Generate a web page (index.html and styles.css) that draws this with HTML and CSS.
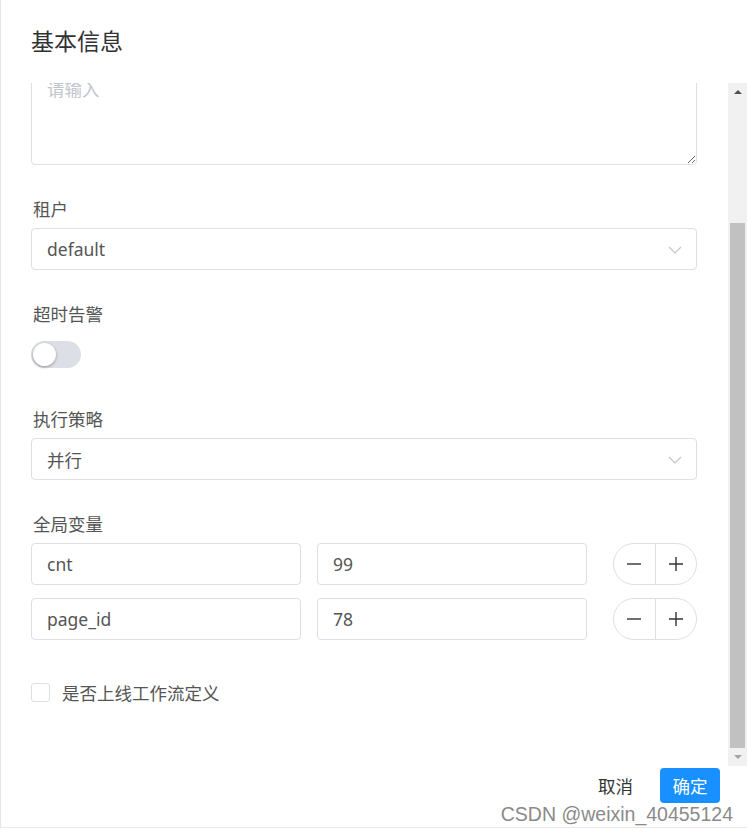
FILE: index.html
```html
<!DOCTYPE html>
<html lang="zh">
<head>
<meta charset="utf-8">
<link rel="stylesheet" href="styles.css">
</head>
<body>
<div class="dialog">
  <div class="header"><span class="title">基本信息</span></div>
  <div class="body">
    <div class="content">
      <div class="inner">
        <textarea class="textarea" placeholder="请输入"></textarea>

        <div class="item">
          <div class="label">租户</div>
          <div class="select"><span>default</span>
            <svg class="arrow" width="14" height="8" viewBox="0 0 14 8"><path d="M1 1l6 6 6-6" fill="none" stroke="#c0c4cc" stroke-width="1.2"/></svg>
          </div>
        </div>

        <div class="item">
          <div class="label">超时告警</div>
          <div class="switch-wrap"><div class="switch"><div class="knob"></div></div></div>
        </div>

        <div class="item">
          <div class="label">执行策略</div>
          <div class="select"><span>并行</span>
            <svg class="arrow" width="14" height="8" viewBox="0 0 14 8"><path d="M1 1l6 6 6-6" fill="none" stroke="#c0c4cc" stroke-width="1.2"/></svg>
          </div>
        </div>

        <div class="item">
          <div class="label">全局变量</div>
          <div class="vars">
            <div class="var-row">
              <div class="input">cnt</div>
              <div class="input">99</div>
              <div class="btn-group">
                <div class="gbtn"><svg width="16" height="16" viewBox="0 0 16 16"><path d="M1 8h14" stroke="#333" stroke-width="1.4"/></svg></div>
                <div class="gbtn sep"><svg width="16" height="16" viewBox="0 0 16 16"><path d="M1 8h14M8 1v14" stroke="#333" stroke-width="1.4"/></svg></div>
              </div>
            </div>
            <div class="var-row">
              <div class="input">page_id</div>
              <div class="input">78</div>
              <div class="btn-group">
                <div class="gbtn"><svg width="16" height="16" viewBox="0 0 16 16"><path d="M1 8h14" stroke="#333" stroke-width="1.4"/></svg></div>
                <div class="gbtn sep"><svg width="16" height="16" viewBox="0 0 16 16"><path d="M1 8h14M8 1v14" stroke="#333" stroke-width="1.4"/></svg></div>
              </div>
            </div>
          </div>
        </div>

        <div class="check-row">
          <span class="checkbox"></span>
          <span class="check-label">是否上线工作流定义</span>
        </div>
      </div>
    </div>
    <div class="scrollbar">
      <div class="sb-arrow up"></div>
      <div class="sb-track"><div class="sb-thumb"></div></div>
      <div class="sb-arrow down"></div>
    </div>
  </div>
  <div class="footer">
    <span class="cancel">取消</span>
    <span class="ok">确定</span>
  </div>
  <div class="watermark">CSDN @weixin_40455124</div>
</div>
</body>
</html>
```
FILE: styles.css
```css
* { box-sizing: border-box; }
html, body { margin: 0; padding: 0; background: #fff; }
body {
  font-family: "Noto Sans", "Noto Sans CJK SC", sans-serif;
  color: #606266;
  width: 747px;
  height: 834px;
  overflow: hidden;
}
.dialog {
  position: relative;
  width: 747px;
  height: 828px;
  border-left: 1px solid #e4e4ec;
  border-bottom: 1px solid #e8e8ec;
  display: flex;
  flex-direction: column;
  background: #fff;
}
.header {
  height: 83px;
  padding-left: 30px;
  display: flex;
  align-items: center;
  padding-bottom: 3px;
}
.title {
  font-family: "Noto Sans CJK SC", sans-serif;
  font-size: 23px;
  color: #303133;
}
.body {
  height: 683px;
  display: flex;
}
.content {
  flex: 1;
  overflow: hidden;
  padding: 0 30px 0 30px;
}
.inner { margin-top: -12px; }
.textarea {
  display: block;
  width: 666px;
  height: 94px;
  border: 1px solid #dcdfe6;
  border-radius: 4px;
  padding: 5px 15px;
  font-family: "Noto Sans CJK SC", sans-serif;
  font-size: 17.5px;
  line-height: 24px;
  color: #606266;
  resize: vertical;
  margin: 0 0 31px 0;
  outline: none;
}
.textarea::placeholder { color: #c0c4cc; }
.item { margin-bottom: 31px; }
.label {
  font-family: "Noto Sans CJK SC", sans-serif;
  font-size: 17.5px;
  line-height: 26px;
  height: 26px;
  padding-left: 2px;
  margin-bottom: 6px;
  color: #555;
}
.select {
  width: 666px;
  height: 42px;
  border: 1px solid #dcdfe6;
  border-radius: 4px;
  display: flex;
  align-items: center;
  justify-content: space-between;
  padding: 0 14px 0 15px;
  font-size: 17.5px;
  color: #555;
}
.arrow { display: block; margin-top: 1px; }
.switch-wrap {
  height: 42px;
  display: flex;
  align-items: center;
}
.switch {
  width: 50px;
  height: 27px;
  border-radius: 14px;
  background: #dcdfe6;
  padding: 2px;
  display: flex;
  align-items: center;
}
.knob {
  width: 23px;
  height: 23px;
  border-radius: 50%;
  background: #fff;
  box-shadow: 0 1px 3px rgba(0,0,0,0.35);
}
.vars { display: flex; flex-direction: column; gap: 13px; }
.var-row { display: flex; align-items: center; }
.input {
  width: 270px;
  height: 42px;
  border: 1px solid #dcdfe6;
  border-radius: 4px;
  padding: 0 15px;
  display: flex;
  align-items: center;
  font-size: 17.5px;
  color: #555;
  margin-right: 16px;
}
.btn-group {
  margin-left: 10px;
  width: 84px;
  height: 42px;
  border: 1px solid #dcdfe6;
  border-radius: 21px;
  display: flex;
}
.gbtn {
  flex: 1;
  display: flex;
  align-items: center;
  justify-content: center;
}
.gbtn.sep { border-left: 1px solid #dcdfe6; }
.check-row {
  display: flex;
  align-items: center;
  height: 40px;
  margin-top: 32px;
}
.checkbox {
  width: 19px;
  height: 19px;
  border: 1px solid #dcdfe6;
  border-radius: 3px;
  margin-right: 12px;
}
.check-label {
  font-family: "Noto Sans CJK SC", sans-serif;
  font-size: 17.5px;
  color: #555;
}
.scrollbar {
  width: 19px;
  background: #f1f1f1;
  display: flex;
  flex-direction: column;
  align-items: center;
}
.sb-arrow {
  height: 19px;
  width: 19px;
  display: flex;
  align-items: center;
  justify-content: center;
}
.sb-arrow.up::after {
  content: "";
  border-left: 4px solid transparent;
  border-right: 4px solid transparent;
  border-bottom: 4px solid #505050;
}
.sb-arrow.down::after {
  content: "";
  border-left: 4px solid transparent;
  border-right: 4px solid transparent;
  border-top: 4px solid #a3a3a3;
}
.sb-track { flex: 1; width: 100%; padding: 121px 2px 0 2px; }
.sb-thumb { height: 525px; background: #c1c1c1; }
.footer {
  flex: 1;
  display: flex;
  align-items: flex-start;
  justify-content: flex-end;
  padding: 2px 27px 0 0;
  font-family: "Noto Sans CJK SC", sans-serif;
  font-size: 17.5px;
}
.cancel {
  color: #333;
  height: 35px;
  line-height: 35px;
  margin-right: 27px;
}
.ok {
  background: #1890ff;
  color: #fff;
  width: 60px;
  height: 35px;
  line-height: 35px;
  text-align: center;
  border-radius: 4px;
}
.watermark {
  position: absolute;
  right: 14px;
  bottom: 1px;
  font-family: "Liberation Sans", Arial, sans-serif;
  font-size: 19.5px;
  color: #8a8a8a;
  text-shadow: 0 0 1px #fff;
}
```
